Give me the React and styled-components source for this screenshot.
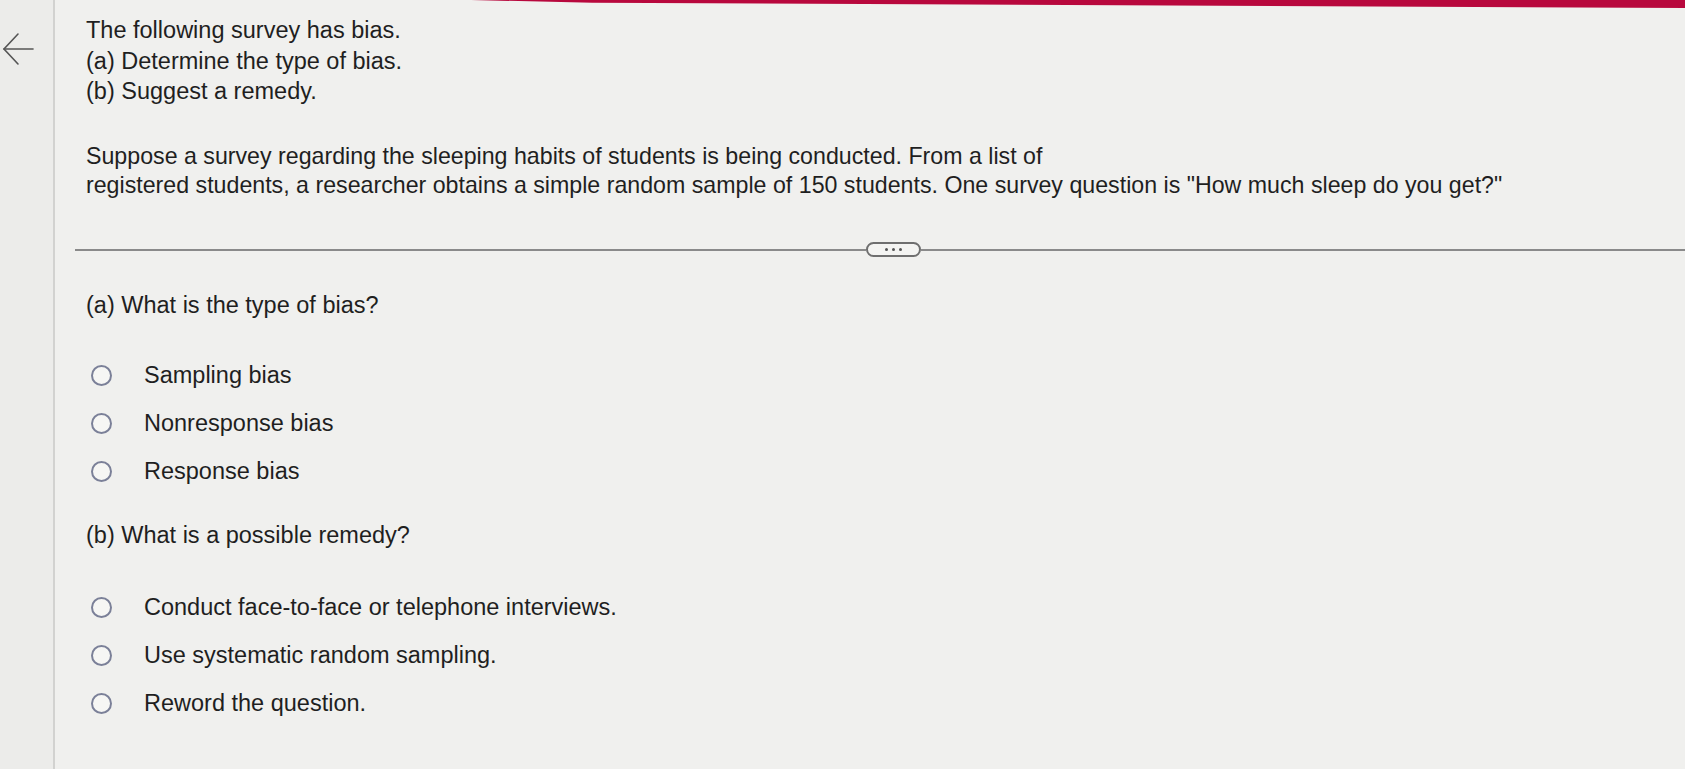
import React from 'react';
import styled, { createGlobalStyle } from 'styled-components';

const GlobalStyle = createGlobalStyle`
  html, body {
    margin: 0;
    padding: 0;
    background: #efefed;
  }
  body {
    font-family: "Liberation Sans", Arial, sans-serif;
    color: #1f1f1f;
  }
`;

const Page = styled.div`
  display: flex;
  width: 1685px;
  height: 769px;
  overflow: hidden;
  background: #f0f0ee;
`;

const Sidebar = styled.div`
  width: 55px;
  flex-shrink: 0;
  background: #ececea;
  border-right: 2px solid #d2d2d0;
  padding-top: 32px;
  box-sizing: border-box;
`;

const BackButton = styled.button`
  display: block;
  background: none;
  border: none;
  padding: 0;
  margin-left: 2px;
  color: #555;
  cursor: pointer;
`;

const Main = styled.div`
  flex: 1;
  display: flex;
  flex-direction: column;
`;

const TopBar = styled.div`
  height: 8px;
  margin-left: 416px;
  background: #b8083d;
  clip-path: polygon(0 0, 100% 0, 100% 100%, 10% 35%, 0 0);
`;

const Content = styled.div`
  padding: 7px 0 0 31px;
`;

const Text = styled.p`
  margin: 0;
  font-size: 23.5px;
  line-height: 29px;
`;

const Intro = styled(Text)`
  line-height: 30.5px;
`;

const Paragraph = styled(Text)`
  margin-top: 35px;
  font-size: 23.2px;
`;

const DividerRow = styled.div`
  display: flex;
  align-items: center;
  margin: 42px 0 0 20px;
  height: 16px;
`;

const Rule = styled.div`
  flex: ${p => (p.$grow ? 1 : 'none')};
  width: ${p => (p.$grow ? 'auto' : '791px')};
  height: 2px;
  background: #8a8a8a;
`;

const MorePill = styled.button`
  width: 55px;
  height: 15px;
  border: 2px solid #6f6f6f;
  border-radius: 8px;
  background: #f4f4f2;
  display: flex;
  align-items: center;
  justify-content: center;
  gap: 4px;
  padding: 0;
  box-sizing: border-box;
`;

const Dot = styled.span`
  width: 3px;
  height: 3px;
  border-radius: 50%;
  background: #555;
`;

const Question = styled(Text)`
  margin-top: ${p => p.$top}px;
`;

const Options = styled.div`
  display: flex;
  flex-direction: column;
  margin-top: ${p => p.$top}px;
`;

const OptionRow = styled.label`
  display: flex;
  align-items: center;
  height: 48px;
  font-size: 23.5px;
  cursor: pointer;
`;

const Radio = styled.span`
  width: 21px;
  height: 21px;
  border-radius: 50%;
  border: 2.5px solid #7b8098;
  box-sizing: border-box;
  margin-left: 5px;
  margin-right: 32px;
  background: #f6f6f4;
  flex-shrink: 0;
`;

function BackArrow() {
  return (
    <svg width="32" height="34" viewBox="0 0 32 34" fill="none" stroke="#555" strokeWidth="1.6" strokeLinecap="round">
      <path d="M31 17H2" />
      <path d="M16 2L2 17l14 15" />
    </svg>
  );
}

function Option({ children }) {
  return (
    <OptionRow>
      <Radio />
      {children}
    </OptionRow>
  );
}

export default function App() {
  return (
    <>
      <GlobalStyle />
      <Page>
        <Sidebar>
          <BackButton aria-label="Back">
            <BackArrow />
          </BackButton>
        </Sidebar>
        <Main>
          <TopBar />
          <Content>
            <Intro>
              The following survey has bias.<br />
              (a) Determine the type of bias.<br />
              (b) Suggest a remedy.
            </Intro>
            <Paragraph>
              Suppose a survey regarding the sleeping habits of students is being conducted. From a list of<br />
              registered students, a researcher obtains a simple random sample of 150 students. One survey question is "How much sleep do you get?"
            </Paragraph>
          </Content>
          <DividerRow>
            <Rule />
            <MorePill aria-label="More">
              <Dot /><Dot /><Dot />
            </MorePill>
            <Rule $grow />
          </DividerRow>
          <Content>
            <Question $top={26}>(a) What is the type of bias?</Question>
            <Options $top={32}>
              <Option>Sampling bias</Option>
              <Option>Nonresponse bias</Option>
              <Option>Response bias</Option>
            </Options>
            <Question $top={25}>(b) What is a possible remedy?</Question>
            <Options $top={34}>
              <Option>Conduct face-to-face or telephone interviews.</Option>
              <Option>Use systematic random sampling.</Option>
              <Option>Reword the question.</Option>
            </Options>
          </Content>
        </Main>
      </Page>
    </>
  );
}
